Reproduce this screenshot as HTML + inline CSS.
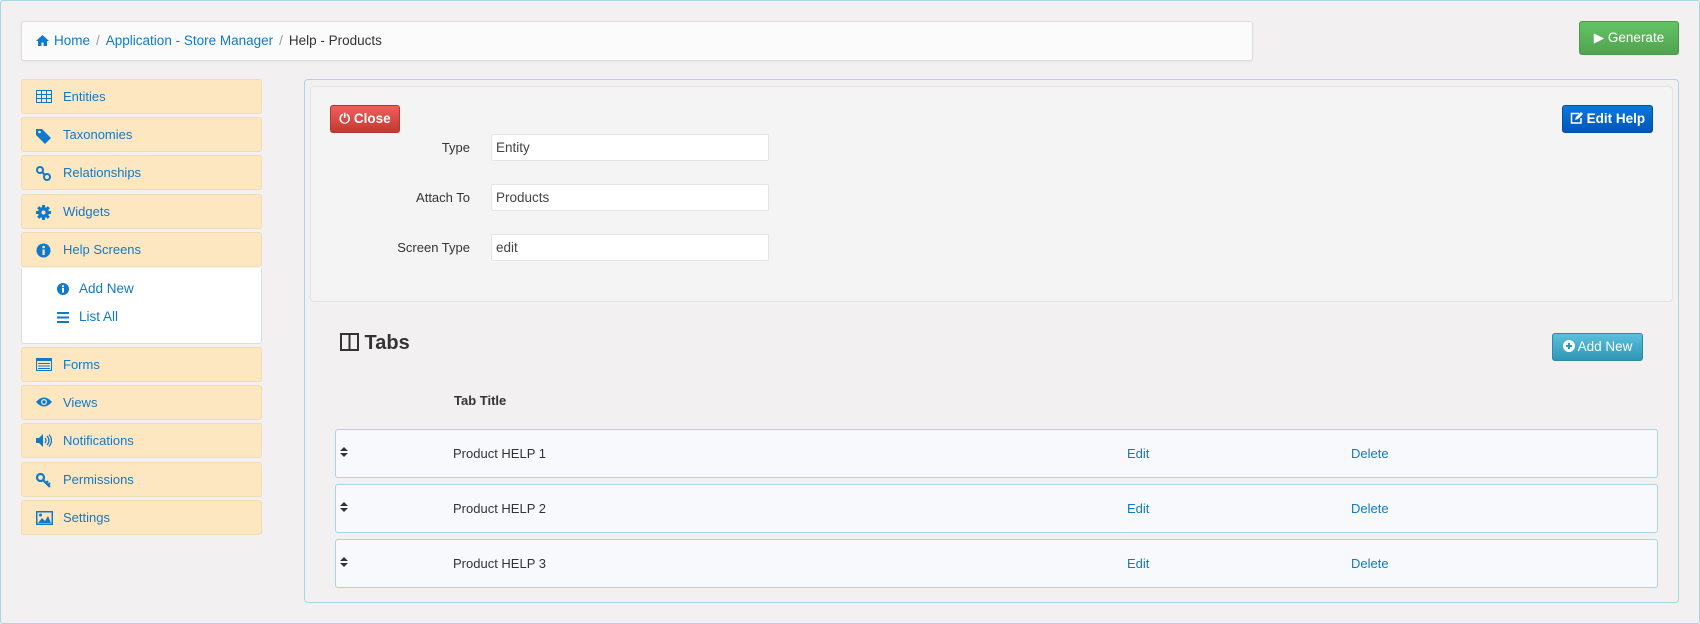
<!DOCTYPE html>
<html><head><meta charset="utf-8"><style>
*{box-sizing:border-box;margin:0;padding:0}
body{width:1700px;height:624px;background:#f2f0f0;font-family:"Liberation Sans",sans-serif;font-size:13px;color:#333;position:relative;overflow:hidden}
.frame{position:absolute;left:0;top:0;width:1700px;height:624px;border:1px solid #a9d6e5;border-radius:3px}
.abs{position:absolute}
.bc{left:21px;top:21px;width:1232px;height:40px;background:#fbfbfb;border:1px solid #ddd;border-radius:3px;font-size:13.5px;line-height:38px;padding-left:14px;box-shadow:0 1px 2px rgba(0,0,0,.05)}
.bc a{color:#1179c9}
.bc .sep{color:#999;margin:0 6px}
.btn{position:absolute;color:#fff;font-size:13.5px;border-radius:3px;text-align:center;line-height:26px}
.side{left:21px;width:241px;height:35px;background:#fde7c1;border:1px solid #f1dcb6;border-radius:3px;color:#1179c9;font-size:13px;line-height:33px;padding-left:41px}
.side svg{position:absolute;left:14px;top:10px}
.sub{left:21px;top:268px;width:241px;height:76px;background:#fff;border:1px solid #ddd;border-top:none;border-radius:0 0 3px 3px}
.sub div{position:absolute;left:57px;color:#1179c9;font-size:13.5px}
.lab{position:absolute;right:1230px;font-size:13px;color:#333}
.inp{position:absolute;left:491px;width:278px;height:27px;background:#fff;border:1px solid #e4e4e4;border-radius:2px;padding-left:4px;line-height:25px;font-size:13.5px;color:#444}
.row{position:absolute;left:335px;width:1323px;height:49px;background:#f7f9fd;border:1px solid #a9d6e5;border-radius:3px}
.row .t{position:absolute;left:117px;top:16px;font-size:13px}
.row .e{position:absolute;left:791px;top:16px;color:#1179c9;font-size:13px}
.row .d{position:absolute;left:1015px;top:16px;color:#1179c9;font-size:13px}
.row .s{position:absolute;left:4px;top:17px}
</style></head><body>
<div class="frame"></div>
<div class="abs bc"><svg width="13" height="11" viewBox="0 0 13 11" style="vertical-align:-1px;margin-right:5px"><path d="M6.5 0L0 6h2v5h3.5V7.5h2V11H11V6h2z" fill="#1179c9"/></svg><a>Home</a><span class="sep">/</span><a>Application - Store Manager</a><span class="sep">/</span>Help - Products</div>
<div class="btn" style="left:1579px;top:21px;width:100px;height:34px;line-height:32px;background:linear-gradient(#62c462,#51a351);border:1px solid #4a9a4a">▶ Generate</div>

<div class="abs side" style="top:79px"><svg width="16" height="13"><rect x="0.5" y="0.5" width="15" height="12" fill="none" stroke="#1179c9"/><path d="M0 4.5h16M0 8.5h16M5.5 0v13M10.5 0v13" stroke="#1179c9"/></svg>Entities</div>
<div class="abs side" style="top:117px"><svg width="16" height="16"><path d="M0 1v6l9 9 6-6-9-9z" fill="#1179c9"/><circle cx="3.5" cy="4" r="1.3" fill="#fde7c1"/></svg>Taxonomies</div>
<div class="abs side" style="top:155px"><svg width="16" height="16"><circle cx="4" cy="4" r="3" fill="none" stroke="#1179c9" stroke-width="2"/><circle cx="11" cy="11" r="3" fill="none" stroke="#1179c9" stroke-width="2"/><path d="M6 6l3 3" stroke="#1179c9" stroke-width="2"/></svg>Relationships</div>
<div class="abs side" style="top:194px"><svg width="15" height="15"><circle cx="7.5" cy="7.5" r="5.5" fill="#1179c9"/><path d="M7.5 0v15M0 7.5h15M2.2 2.2l10.6 10.6M12.8 2.2L2.2 12.8" stroke="#1179c9" stroke-width="3"/><circle cx="7.5" cy="7.5" r="2" fill="#fde7c1"/></svg>Widgets</div>
<div class="abs side" style="top:232px"><svg width="15" height="15"><circle cx="7.5" cy="7.5" r="7" fill="#1179c9"/><rect x="6.5" y="6.5" width="2.2" height="5.5" fill="#fde7c1"/><circle cx="7.6" cy="4" r="1.3" fill="#fde7c1"/></svg>Help Screens</div>
<div class="abs sub">
<svg class="abs" style="left:35px;top:15px" width="12" height="12"><circle cx="6" cy="6" r="6" fill="#1179c9"/><rect x="5" y="5" width="2" height="4.5" fill="#fff"/><circle cx="6" cy="3.2" r="1.1" fill="#fff"/></svg>
<div style="top:13px">Add New</div>
<svg class="abs" style="left:35px;top:44px" width="12" height="11"><path d="M0 1h12M0 5.5h12M0 10h12" stroke="#1179c9" stroke-width="2"/></svg>
<div style="top:41px">List All</div>
</div>
<div class="abs side" style="top:347px"><svg width="16" height="13"><rect x="0.5" y="0.5" width="15" height="12" fill="none" stroke="#1179c9"/><rect x="0" y="0" width="16" height="3" fill="#1179c9"/><path d="M2 5.5h12M2 8h12M2 10.5h12" stroke="#1179c9"/></svg>Forms</div>
<div class="abs side" style="top:385px"><svg width="16" height="12"><path d="M0 6Q8-3 16 6Q8 15 0 6z" fill="#1179c9"/><circle cx="8" cy="6" r="3" fill="#fde7c1"/><circle cx="8" cy="6" r="1.8" fill="#1179c9"/></svg>Views</div>
<div class="abs side" style="top:423px"><svg width="16" height="13"><path d="M0 4h3l4-4v13l-4-4H0z" fill="#1179c9"/><path d="M9 4q2 2.5 0 5M11 2q4 4.5 0 9M13 0.5q5 6 0 12" stroke="#1179c9" fill="none" stroke-width="1.3"/></svg>Notifications</div>
<div class="abs side" style="top:462px"><svg width="16" height="15"><circle cx="4.5" cy="4.5" r="3.5" fill="none" stroke="#1179c9" stroke-width="2.2"/><path d="M7 7l7 7M10 10l2-2M12 12l2-2" stroke="#1179c9" stroke-width="2.2"/></svg>Permissions</div>
<div class="abs side" style="top:500px"><svg width="17" height="14"><rect x="0.75" y="0.75" width="15.5" height="12.5" fill="none" stroke="#1179c9" stroke-width="1.5"/><path d="M2 12l4-5 3 3 3-5 3 7z" fill="#1179c9"/><circle cx="4.5" cy="4" r="1.5" fill="#1179c9"/></svg>Settings</div>

<div class="abs" style="left:304px;top:79px;width:1375px;height:524px;border:1px solid #a9d6e5;border-radius:4px"></div>
<div class="abs" style="left:310px;top:86px;width:1363px;height:216px;background:#f5f4f4;border:1px solid #e3e3e3;border-radius:4px"></div>
<div class="btn" style="left:330px;top:105px;width:70px;height:28px;background:linear-gradient(#ee5f5b,#c33a32);border:1px solid #b8342e;font-weight:bold">⏻ Close</div>
<div class="btn" style="left:1562px;top:105px;width:91px;height:28px;background:linear-gradient(#0a7ad8,#0055bb);border:1px solid #0050a8;font-weight:bold"><svg width="13" height="12" style="vertical-align:-1px"><path d="M9 1.5H1.5v9.5H11V6" fill="none" stroke="#fff" stroke-width="1.5"/><path d="M5 8l1-3 5-5 2 2-5 5z" fill="#fff"/></svg> Edit Help</div>

<div class="lab" style="top:140px">Type</div>
<div class="lab" style="top:190px">Attach To</div>
<div class="lab" style="top:240px">Screen Type</div>
<div class="inp" style="top:134px">Entity</div>
<div class="inp" style="top:184px">Products</div>
<div class="inp" style="top:234px">edit</div>

<div class="abs" style="left:340px;top:332px;font-size:20px;font-weight:bold;color:#333"><svg width="19" height="18" style="vertical-align:-2px"><rect x="1" y="1" width="17" height="16" fill="none" stroke="#333" stroke-width="2"/><path d="M9.5 1v16" stroke="#333" stroke-width="2"/></svg> Tabs</div>
<div class="btn" style="left:1552px;top:333px;width:91px;height:28px;background:linear-gradient(#5bc0de,#2f96b4);border:1px solid #2a8aa8"><svg width="12" height="12" style="vertical-align:-1px"><circle cx="6" cy="6" r="6" fill="#fff"/><path d="M6 3v6M3 6h6" stroke="#2f96b4" stroke-width="2"/></svg> Add New</div>
<div class="abs" style="left:454px;top:393px;font-weight:bold;font-size:13px">Tab Title</div>

<div class="row" style="top:429px"><svg class="s" width="8" height="10"><path d="M0 4L4 0l4 4zM0 6l4 4 4-4z" fill="#333"/></svg><div class="t">Product HELP 1</div><div class="e">Edit</div><div class="d">Delete</div></div>
<div class="row" style="top:484px"><svg class="s" width="8" height="10"><path d="M0 4L4 0l4 4zM0 6l4 4 4-4z" fill="#333"/></svg><div class="t">Product HELP 2</div><div class="e">Edit</div><div class="d">Delete</div></div>
<div class="row" style="top:539px"><svg class="s" width="8" height="10"><path d="M0 4L4 0l4 4zM0 6l4 4 4-4z" fill="#333"/></svg><div class="t">Product HELP 3</div><div class="e">Edit</div><div class="d">Delete</div></div>
</body></html>
